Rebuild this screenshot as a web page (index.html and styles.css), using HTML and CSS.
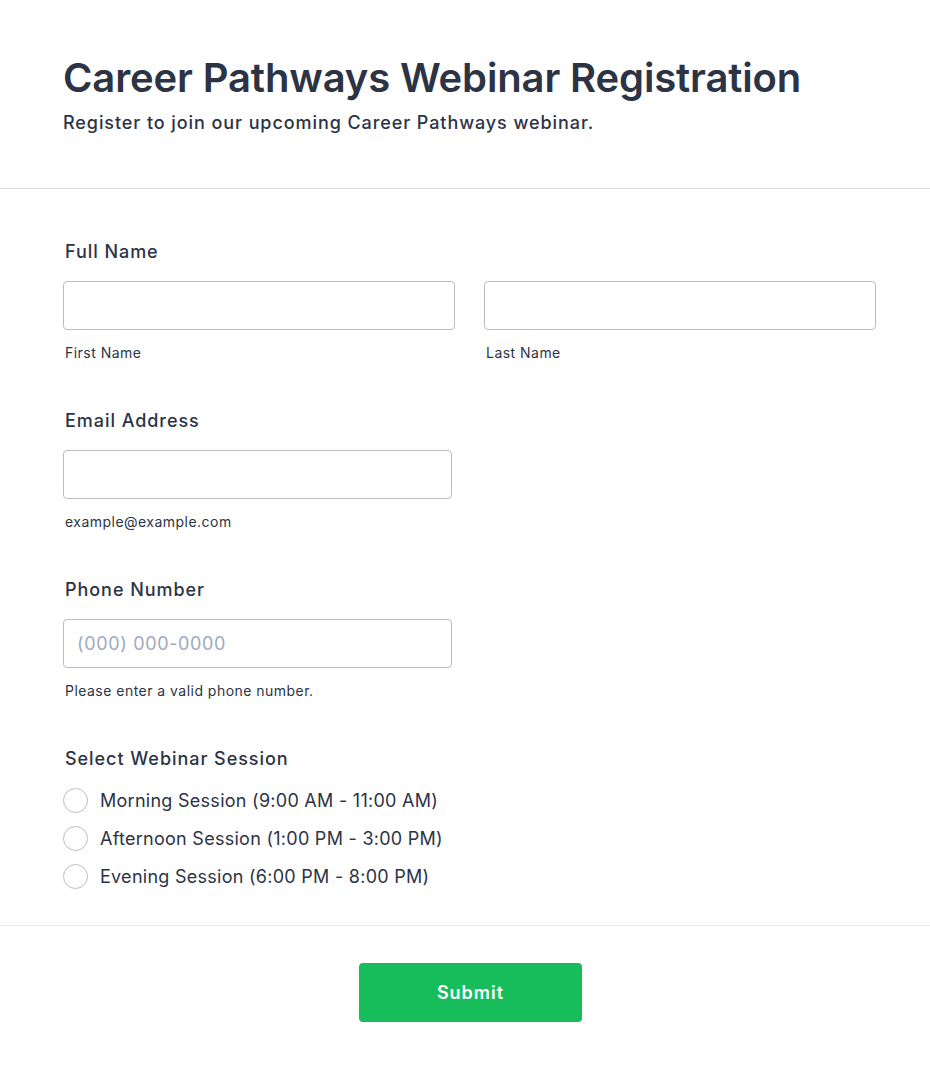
FILE: index.html
```html
<!DOCTYPE html>
<html lang="en">
<head>
    <meta charset="UTF-8">
    <meta name="viewport" content="width=device-width, initial-scale=1.0">
    <title>Career Pathways Webinar Registration</title>
    <link rel="stylesheet" href="styles.css">
</head>
<body>
    <div class="form-header">
        <h1 class="title">Career Pathways Webinar Registration</h1>
        <p class="subtitle">Register to join our upcoming Career Pathways webinar.</p>
    </div>
    <form class="form-body">
        <div class="field">
            <label class="field-label">Full Name</label>
            <div class="name-row">
                <div class="name-col">
                    <input type="text" class="text-input">
                    <span class="sublabel">First Name</span>
                </div>
                <div class="name-col">
                    <input type="text" class="text-input">
                    <span class="sublabel">Last Name</span>
                </div>
            </div>
        </div>
        <div class="field">
            <label class="field-label">Email Address</label>
            <input type="email" class="text-input short">
            <span class="sublabel">example@example.com</span>
        </div>
        <div class="field">
            <label class="field-label">Phone Number</label>
            <input type="tel" class="text-input short" placeholder="(000) 000-0000">
            <span class="sublabel">Please enter a valid phone number.</span>
        </div>
        <div class="field">
            <label class="field-label">Select Webinar Session</label>
            <div class="radio-list">
                <label class="radio-item"><input type="radio" name="session"><span>Morning Session (9:00 AM - 11:00 AM)</span></label>
                <label class="radio-item"><input type="radio" name="session"><span>Afternoon Session (1:00 PM - 3:00 PM)</span></label>
                <label class="radio-item"><input type="radio" name="session"><span>Evening Session (6:00 PM - 8:00 PM)</span></label>
            </div>
        </div>
    </form>
    <div class="form-footer">
        <button type="button" class="submit-btn">Submit</button>
    </div>
</body>
</html>
```

FILE: styles.css
```css
body {
    margin: 0;
    font-family: Inter, "Noto Sans", sans-serif;
    color: #2c3345;
    background-color: #fff;
}
.form-header {
    padding: 54px 63px 53px;
    border-bottom: 1px solid #d8dae3;
}
.title {
    margin: 0;
    font-size: 40px;
    font-weight: 600;
    line-height: 48px;
    letter-spacing: -0.14px;
}
.subtitle {
    margin: 8px 0 0;
    font-size: 18px;
    font-weight: 500;
    line-height: 25px;
    letter-spacing: 0.92px;
}
.form-body {
    padding: 50px 54px 30px 63px;
    border-bottom: 1px solid #e8eaf0;
}
.field {
    display: flex;
    flex-direction: column;
    align-items: flex-start;
    margin-bottom: 45px;
}
.field:last-child {
    margin-bottom: 0;
}
.field-label {
    font-size: 18px;
    font-weight: 500;
    line-height: 25px;
    letter-spacing: 0.95px;
    margin: 0 0 17px 2px;
}
.name-row {
    display: flex;
    gap: 29px;
    width: 100%;
}
.name-col {
    flex: 1;
    display: flex;
    flex-direction: column;
}
.text-input {
    box-sizing: border-box;
    width: 100%;
    height: 49px;
    padding: 0 13px;
    border: 1px solid #b8bdc9;
    border-radius: 4px;
    font-family: inherit;
    font-size: 18px;
    letter-spacing: 0.65px;
    color: #2c3345;
    background: #fff;
}
.text-input.short {
    width: 389px;
}
.text-input::placeholder {
    color: #a0aabc;
}
.sublabel {
    margin: 13px 0 0 2px;
    font-size: 14px;
    line-height: 20px;
    letter-spacing: 0.47px;
}
.radio-list {
    display: flex;
    flex-direction: column;
    margin-top: -7px;
}
.radio-item {
    display: flex;
    align-items: center;
    gap: 12px;
    height: 38px;
    font-size: 18px;
    letter-spacing: 0.27px;
}
.radio-item input {
    appearance: none;
    margin: 0;
    width: 25px;
    height: 25px;
    border: 1px solid #b8bdc9;
    border-radius: 50%;
    background: #fff;
}
.form-footer {
    display: flex;
    justify-content: center;
    padding: 37px 53px 49px 64px;
}
.submit-btn {
    width: 223px;
    height: 59px;
    border: none;
    border-radius: 4px;
    background-color: #18bd5b;
    color: #fff;
    font-family: inherit;
    font-size: 18px;
    font-weight: 600;
    letter-spacing: 1px;
    cursor: pointer;
}
```
